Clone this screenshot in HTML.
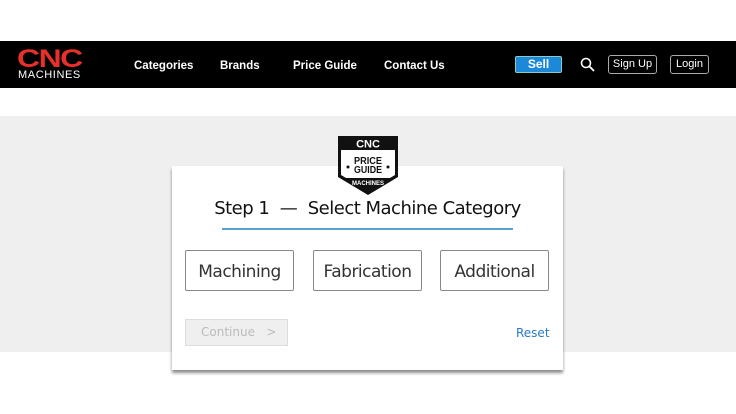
<!DOCTYPE html>
<html><head><style>
*{margin:0;padding:0;box-sizing:border-box}
body{width:736px;height:414px;background:#fff;position:relative;overflow:hidden;font-family:"Liberation Sans",sans-serif}
.nav{position:absolute;left:0;top:41px;width:736px;height:47px;background:#000}
.a{position:absolute;color:#fff;font-weight:bold;font-size:11.5px;top:19px}
.gray{position:absolute;left:0;top:116px;width:736px;height:236px;background:#efefef}
.card{position:absolute;left:172px;top:166px;width:391px;height:204px;background:#fff;box-shadow:0 3px 3px rgba(0,0,0,.45)}
.opt{position:absolute;top:84px;height:41px;border:1px solid #888;border-radius:2px;font-size:17px;color:#333;text-align:center;line-height:42px;font-family:"DejaVu Sans",sans-serif;letter-spacing:-.5px}
</style></head><body>
<div class="nav">
 <div style="position:absolute;left:17px;top:3px;color:#e8302a;font-weight:900;font-size:22px;letter-spacing:-1px;transform:scale(1.45,1.15);transform-origin:left top">CNC</div>
 <div style="position:absolute;left:18px;top:28px;color:#fff;font-size:11px;letter-spacing:.6px">MACHINES</div>
 <div class="a" style="left:134px">Categories</div>
 <div class="a" style="left:220px">Brands</div>
 <div class="a" style="left:293px">Price Guide</div>
 <div class="a" style="left:384px">Contact Us</div>
 <div style="position:absolute;left:515px;top:15px;width:47px;height:17px;background:#1e88d8;border:1px solid #8cc;border-radius:2px;color:#fff;font-weight:bold;font-size:12px;text-align:center;line-height:15px">Sell</div>
 <svg style="position:absolute;left:580px;top:16px" width="15" height="15"><circle cx="6" cy="6" r="4.5" stroke="#fff" stroke-width="1.6" fill="none"/><line x1="9.5" y1="9.5" x2="14" y2="14" stroke="#fff" stroke-width="1.8"/></svg>
 <div style="position:absolute;left:608px;top:14px;width:49px;height:19px;border:1px solid #aaa;border-radius:3px;color:#fff;font-size:11px;text-align:center;line-height:17px">Sign Up</div>
 <div style="position:absolute;left:670px;top:14px;width:39px;height:19px;border:1px solid #aaa;border-radius:3px;color:#fff;font-size:11px;text-align:center;line-height:17px">Login</div>
</div>
<div class="gray"></div>
<div class="card">
 <div style="position:absolute;left:0;width:391px;top:32px;text-align:center;font-size:18px;color:#111;font-family:'DejaVu Sans',sans-serif;letter-spacing:-.5px">Step 1&nbsp; —&nbsp; Select Machine Category</div>
 <div style="position:absolute;left:50px;top:62px;width:291px;height:2px;background:#5a9fd4"></div>
 <div class="opt" style="left:13px;width:109px">Machining</div>
 <div class="opt" style="left:141px;width:109px">Fabrication</div>
 <div class="opt" style="left:268px;width:109px">Additional</div>
 <div style="position:absolute;left:13px;top:153px;width:103px;height:27px;background:#efefef;border:1px solid #ddd;color:#bbb;font-size:12px;line-height:25px;padding-left:15px;font-family:'DejaVu Sans',sans-serif">Continue &nbsp;&nbsp;&gt;</div>
 <div style="position:absolute;left:344px;top:160px;color:#2a7ac0;font-size:12px;font-family:'DejaVu Sans',sans-serif">Reset</div>
</div>
<svg style="position:absolute;left:337px;top:135px" width="62" height="61" viewBox="0 0 62 61">
 <path d="M1 1H61V42L31 60L1 42Z" fill="#111"/>
 <path d="M4 15H58V40L31 56L4 40Z" fill="#fff"/>
 <path d="M7 43H55L31 57Z" fill="#111"/>
 <text x="31" y="12.5" fill="#fff" font-size="11" font-weight="bold" text-anchor="middle" font-family="Liberation Sans">CNC</text>
 <text x="31" y="29" fill="#111" font-size="10" font-weight="bold" text-anchor="middle" font-family="Liberation Sans" textLength="28" lengthAdjust="spacingAndGlyphs">PRICE</text>
 <text x="31" y="38" fill="#111" font-size="10" font-weight="bold" text-anchor="middle" font-family="Liberation Sans" textLength="28" lengthAdjust="spacingAndGlyphs">GUIDE</text>
 <circle cx="11" cy="32" r="1.5" fill="#111"/><circle cx="51" cy="32" r="1.5" fill="#111"/>
 <text x="31" y="50" fill="#fff" font-size="6" font-weight="bold" text-anchor="middle" font-family="Liberation Sans">MACHINES</text>
</svg>
</body></html>
